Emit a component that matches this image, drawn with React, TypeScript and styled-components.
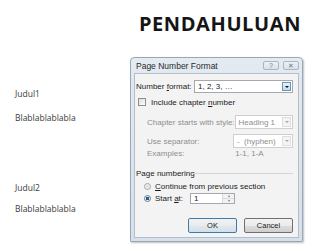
import React from "react"
import styled, { createGlobalStyle } from "styled-components"

const GlobalStyle = createGlobalStyle`
  html, body {
    margin: 0;
    padding: 0;
    background: #ffffff;
  }
  body {
    font-family: "Liberation Sans", Arial, sans-serif;
  }
`

const Page = styled.div`
  width: 320px;
  height: 251px;
  overflow: hidden;
  display: flex;
  flex-direction: column;
  background: #ffffff;
`

const Heading = styled.h1`
  margin: 0;
  padding: 13px 19px 0 0;
  text-align: right;
  font-family: "Open Sans", "Liberation Sans", sans-serif;
  font-size: 20px;
  line-height: 22px;
  font-weight: 700;
  letter-spacing: 0.6px;
  color: #151515;
`

const Body = styled.div`
  display: flex;
  margin-top: 22px;
`

const Outline = styled.div`
  width: 130px;
  display: flex;
  flex-direction: column;
  padding-left: 15px;
  box-sizing: border-box;
`

const OutlineText = styled.div<{ top: number }>`
  margin-top: ${(p) => p.top}px;
  font-family: "Open Sans", "Liberation Sans", sans-serif;
  font-size: 8.5px;
  line-height: 11px;
  color: #3a3a3a;
`

const Dialog = styled.div`
  width: 173px;
  height: 185px;
  box-sizing: border-box;
  display: flex;
  flex-direction: column;
  background: linear-gradient(#e3eaf1, #d6e0ea);
  border: 1px solid #9aa8b6;
  border-radius: 4px 4px 1px 1px;
  padding: 0 3px 3px;
  box-shadow: 1px 1px 2px rgba(0, 0, 0, 0.25);
  font-size: 8px;
  color: #1b1b1b;
`

const TitleBar = styled.div`
  height: 15px;
  display: flex;
  align-items: center;
  padding-left: 2px;
`

const TitleText = styled.span`
  flex: 1;
  font-size: 8.5px;
  color: #2a2a2a;
`

const CaptionButton = styled.div<{ gap?: number }>`
  width: 16px;
  height: 9px;
  margin-left: ${(p) => p.gap ?? 0}px;
  box-sizing: border-box;
  border: 1px solid #a9b6c3;
  border-radius: 2px;
  background: linear-gradient(#eef2f6, #d8e0e8);
  display: flex;
  align-items: center;
  justify-content: center;
  font-size: 7px;
  line-height: 7px;
  color: #6c7a88;
`

const Content = styled.div`
  flex: 1;
  display: flex;
  flex-direction: column;
  background: #f3f3f3;
  border: 1px solid #b4bec8;
  padding: 0 5px 0 1px;
`

const Row = styled.div<{ top: number; h: number; indent?: number }>`
  display: flex;
  align-items: center;
  margin-top: ${(p) => p.top}px;
  height: ${(p) => p.h}px;
  padding-left: ${(p) => p.indent ?? 0}px;
`

const Label = styled.span<{ w?: number; muted?: boolean }>`
  width: ${(p) => (p.w ? `${p.w}px` : "auto")};
  flex: ${(p) => (p.w ? "none" : "1")};
  color: ${(p) => (p.muted ? "#8e8e8e" : "#1b1b1b")};
  white-space: nowrap;
`

const Combo = styled.div<{ w: number; disabled?: boolean }>`
  width: ${(p) => p.w}px;
  height: 100%;
  box-sizing: border-box;
  display: flex;
  align-items: stretch;
  background: #ffffff;
  border: 1px solid ${(p) => (p.disabled ? "#cfcfcf" : "#a4a9b0")};
  color: ${(p) => (p.disabled ? "#8e8e8e" : "#1b1b1b")};
`

const ComboText = styled.span`
  flex: 1;
  display: flex;
  align-items: center;
  padding-left: 3px;
  white-space: nowrap;
`

const DropButton = styled.div<{ disabled?: boolean }>`
  width: 9px;
  margin: 1px;
  box-sizing: border-box;
  display: flex;
  align-items: center;
  justify-content: center;
  border: 1px solid ${(p) => (p.disabled ? "#dedede" : "#6c95b8")};
  background: ${(p) =>
    p.disabled ? "#f4f4f4" : "linear-gradient(#e7f2fb, #bcdcf3)"};
`

const Arrow = styled.div<{ disabled?: boolean }>`
  width: 0;
  height: 0;
  border-left: 2px solid transparent;
  border-right: 2px solid transparent;
  border-top: 2px solid ${(p) => (p.disabled ? "#a8a8a8" : "#111111")};
`

const CheckBox = styled.div`
  width: 8px;
  height: 8px;
  box-sizing: border-box;
  border: 1px solid #8f8f8f;
  background: linear-gradient(135deg, #dcdcdc, #ffffff);
  margin: 0 5px 0 2px;
`

const GroupLine = styled.div`
  flex: 1;
  height: 1px;
  margin-left: 4px;
  background: #d5d5d5;
`

const Radio = styled.div<{ checked?: boolean }>`
  width: 7px;
  height: 7px;
  box-sizing: border-box;
  border-radius: 50%;
  border: 1px solid ${(p) => (p.checked ? "#6b7c8c" : "#a5a5a5")};
  background: ${(p) =>
    p.checked
      ? "radial-gradient(circle, #1f5f9a 0 1.6px, #e9eef3 1.8px)"
      : "radial-gradient(circle, #dedede, #f7f7f7)"};
  margin-right: 4px;
`

const SpinBox = styled.div`
  width: 45px;
  height: 100%;
  box-sizing: border-box;
  display: flex;
  background: #ffffff;
  border: 1px solid #a4a9b0;
`

const Spinner = styled.div`
  width: 11px;
  display: flex;
  flex-direction: column;
  border-left: 1px solid #dadada;
`

const SpinHalf = styled.div<{ down?: boolean }>`
  flex: 1;
  display: flex;
  align-items: center;
  justify-content: center;
  background: #f2f2f2;
  border-top: ${(p) => (p.down ? "1px solid #dddddd" : "none")};
`

const SpinArrow = styled.div<{ down?: boolean }>`
  width: 0;
  height: 0;
  border-left: 1.5px solid transparent;
  border-right: 1.5px solid transparent;
  ${(p) =>
    p.down ? "border-top: 2px solid #7a7a7a;" : "border-bottom: 2px solid #7a7a7a;"}
`

const ButtonRow = styled.div`
  display: flex;
  justify-content: flex-end;
  gap: 7px;
  margin-top: 14px;
  height: 15px;
`

const Button = styled.div<{ primary?: boolean }>`
  width: 49px;
  box-sizing: border-box;
  display: flex;
  align-items: center;
  justify-content: center;
  border-radius: 2px;
  border: 1px solid ${(p) => (p.primary ? "#3d7bad" : "#707070")};
  background: ${(p) =>
    p.primary
      ? "linear-gradient(#f2f2f2 0%, #ebebeb 50%, #dfe8ef 51%, #d3dfe8 100%)"
      : "linear-gradient(#f2f2f2 0%, #ebebeb 50%, #dddddd 51%, #cfcfcf 100%)"};
  color: #1b1b1b;
  font-size: 7.5px;
`

const u = (s: string) => <span style={{ textDecoration: "underline" }}>{s}</span>

export default function App() {
  return (
    <Page>
      <GlobalStyle />
      <Heading>PENDAHULUAN</Heading>
      <Body>
        <Outline>
          <OutlineText top={31}>Judul1</OutlineText>
          <OutlineText top={13}>Blablablablabla</OutlineText>
          <OutlineText top={59}>Judul2</OutlineText>
          <OutlineText top={10}>Blablablablabla</OutlineText>
        </Outline>

        <Dialog>
          <TitleBar>
            <TitleText>Page Number Format</TitleText>
            <CaptionButton>?</CaptionButton>
            <CaptionButton gap={4}>✕</CaptionButton>
          </TitleBar>
          <Content>
            <Row top={6} h={13}>
              <Label w={58}>
                Number {u("f")}ormat:
              </Label>
              <Combo w={105}>
                <ComboText>1, 2, 3, …</ComboText>
                <DropButton>
                  <Arrow />
                </DropButton>
              </Combo>
            </Row>

            <Row top={4} h={10}>
              <CheckBox />
              <Label>
                Include chapter {u("n")}umber
              </Label>
            </Row>

            <Row top={8} h={14} indent={11}>
              <Label muted>Chapter starts with style:</Label>
              <Combo w={60} disabled>
                <ComboText>Heading 1</ComboText>
                <DropButton disabled>
                  <Arrow disabled />
                </DropButton>
              </Combo>
            </Row>

            <Row top={5} h={14} indent={11}>
              <Label muted>Use separator:</Label>
              <Combo w={60} disabled>
                <ComboText>-&nbsp;&nbsp;(hyphen)</ComboText>
                <DropButton disabled>
                  <Arrow disabled />
                </DropButton>
              </Combo>
            </Row>

            <Row top={0} h={10} indent={11}>
              <Label muted>Examples:</Label>
              <Label muted w={60}>
                &nbsp;1-1, 1-A
              </Label>
            </Row>

            <Row top={10} h={10}>
              <Label w={52}>Page numbering</Label>
              <GroupLine />
            </Row>

            <Row top={3} h={10} indent={8}>
              <Radio />
              <Label>
                {u("C")}ontinue from previous section
              </Label>
            </Row>

            <Row top={2} h={11} indent={8}>
              <Radio checked />
              <Label w={35}>
                Start {u("a")}t:
              </Label>
              <SpinBox>
                <ComboText>1</ComboText>
                <Spinner>
                  <SpinHalf>
                    <SpinArrow />
                  </SpinHalf>
                  <SpinHalf down>
                    <SpinArrow down />
                  </SpinHalf>
                </Spinner>
              </SpinBox>
            </Row>

            <ButtonRow>
              <Button primary>OK</Button>
              <Button>Cancel</Button>
            </ButtonRow>
          </Content>
        </Dialog>
      </Body>
    </Page>
  )
}
